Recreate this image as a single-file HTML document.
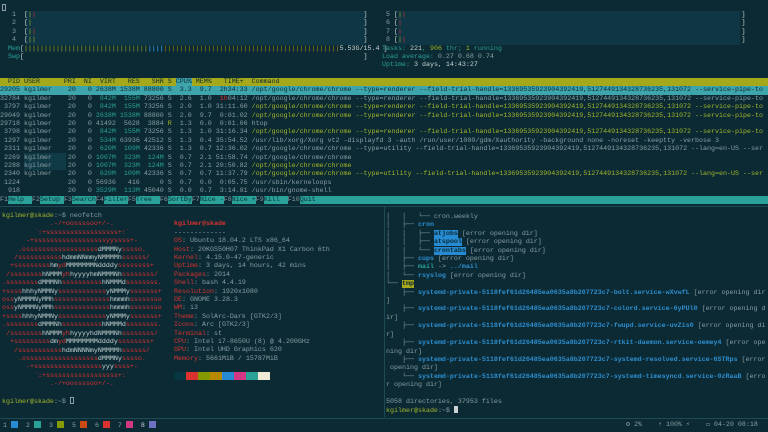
<!DOCTYPE html>
<html><head><meta charset="utf-8"><style>
*{margin:0;padding:0;box-sizing:border-box}
body{width:768px;height:432px;overflow:hidden;background:#0b2a34;font-family:"Liberation Mono",monospace;font-size:6.67px;color:#8a9ea3;position:relative}
pre{position:absolute;font-family:inherit;font-size:inherit;line-height:8.4px;white-space:pre;margin:0}
.r{color:#dc322f}.g{color:#a4b52a}.b{color:#2e8fd0;font-weight:bold}.c{color:#2aa198}.w{color:#c9d3d3}.y{color:#b58900}.m{color:#d33682}
.box{position:absolute}
.fk{background:#2aa198;color:#0b2a34}
.hb{background:#268bd2;color:#0b2a34;font-weight:bold}
.ht{background:#a4a81a;color:#0b2a34;font-weight:bold}
.sq{display:inline-block;width:7px;height:7px;vertical-align:-1px}
</style></head><body>
<div class="box" style="left:2px;top:4px;width:4px;height:7px;border:1px solid #8a9ea3"></div>
<div class="box" style="left:26px;top:11px;width:340px;height:34px;background:#0f3644"></div>
<div class="box" style="left:398px;top:11px;width:342px;height:34px;background:#0f3644"></div>
<pre style="left:0;top:11px">   1  <span class="w">[</span><span class="g">|</span><span class="r">|</span>                                                                                  <span class="w">]</span>
   2  <span class="w">[</span><span class="g">|</span>                                                                                   <span class="w">]</span>
   3  <span class="w">[</span><span class="g">|</span><span class="r">|</span>                                                                                  <span class="w">]</span>
   4  <span class="w">[</span><span class="g">||</span>                                                                                  <span class="w">]</span>
  <span class="c">Mem</span><span class="w">[</span><span class="g">|||||||||||||||||||||||||||||||</span><span class="b">||||</span><span class="y">||||||||||||||||||||||||||||||||||||||||||||</span><span class="w">5.53G/15.4</span> <span class="w">]</span>
  <span class="c">Swp</span><span class="w">[</span>                                                                                     <span class="w">]</span></pre>
<pre style="left:382px;top:11px"> 5 <span class="w">[</span><span class="g">|</span><span class="r">|</span>                                                                                    <span class="w">]</span>
 6 <span class="w">[</span><span class="r">|</span>                                                                                     <span class="w">]</span>
 7 <span class="w">[</span><span class="r">|</span>                                                                                     <span class="w">]</span>
 8 <span class="w">[</span><span class="g">|</span><span class="r">|</span>                                                                                    <span class="w">]</span>
<span class="c">Tasks: </span><span class="w">221</span><span class="c">, </span><span class="g">906</span><span class="c"> thr; </span><span class="g">1</span><span class="c"> running</span>
<span class="c">Load average: </span>0.27 0.68 0.74
<span class="c">Uptime: </span><span class="w">3 days, 14:43:27</span></pre>
<div class="box" style="left:0;top:78px;width:768px;height:8.4px;background:#a4a81a"></div>
<div class="box" style="left:0;top:86.4px;width:768px;height:8.4px;background:#3ea5ac"></div>
<div class="box" style="left:24px;top:153px;width:42px;height:17px;background:#113a47"></div>
<pre style="left:0;top:78px"><span style="color:#0b2a34">  PID USER      PRI  NI  VIRT   RES   SHR S </span><span style="background:#3ea5ac;color:#0b2a34">CPU%</span><span style="color:#0b2a34"> MEM%   TIME+  Command</span>
<span style="color:#0b2a34">29205 kgilmer    20   0 2638M 1538M 88800 S  3.3  9.7  2h34:33 /opt/google/chrome/chrome --type=renderer --field-trial-handle=13369535923904392419,5127449134328736235,131072 --service-pipe-to</span>
32784 kgilmer    20   0  <span class="c">842M  155M</span> 73256 S  2.6  1.0  <span class="r">1h</span>04:12 /opt/google/chrome/chrome --type=renderer --field-trial-handle=13369535923904392419,5127449134328736235,131072 --service-pipe-to
 3797 kgilmer    20   0  <span class="c">842M  155M</span> 73256 S  2.0  1.0 31:11.60 <span class="g">/opt/google/chrome/chrome --type=renderer --field-trial-handle=13369535923904392419,5127449134328736235,131072 --service-pipe-to</span>
29049 kgilmer    20   0 <span class="c">2638M 1538M</span> 88800 S  2.0  9.7  0:01.02 <span class="g">/opt/google/chrome/chrome --type=renderer --field-trial-handle=13369535923904392419,5127449134328736235,131072 --service-pipe-to</span>
29718 kgilmer    20   0 41492  5628  3884 <span class="g">R</span>  1.3  0.0  0:01.06 htop
 3798 kgilmer    20   0  <span class="c">842M  155M</span> 73256 S  1.3  1.0 31:16.34 <span class="g">/opt/google/chrome/chrome --type=renderer --field-trial-handle=13369535923904392419,5127449134328736235,131072 --service-pipe-to</span>
 1297 kgilmer    20   0  <span class="c">534M</span> 63936 42512 S  1.3  0.4 35:54.52 /usr/lib/xorg/Xorg vt2 -displayfd 3 -auth /run/user/1000/gdm/Xauthority -background none -noreset -keeptty -verbose 3
 2311 kgilmer    20   0  <span class="c">620M  109M</span> 42336 S  1.3  0.7 12:36.02 /opt/google/chrome/chrome --type=utility --field-trial-handle=13369535923904392419,5127449134328736235,131072 --lang=en-US --ser
 2269 kgilmer    20   0 <span class="c">1007M  323M  124M</span> S  0.7  2.1 51:58.74 /opt/google/chrome/chrome
 2288 kgilmer    20   0 <span class="c">1007M  323M  124M</span> S  0.7  2.1 20:50.82 <span class="g">/opt/google/chrome/chrome</span>
 2340 kgilmer    20   0  <span class="c">620M  109M</span> 42336 S  0.7  0.7 11:37.79 <span class="g">/opt/google/chrome/chrome --type=utility --field-trial-handle=13369535923904392419,5127449134328736235,131072 --lang=en-US --ser</span>
 1224            20   0 56936   416     0 S  0.7  0.0  0:05.75 /usr/sbin/kerneloops
  918            20   0 <span class="c">3529M  113M</span> 45040 S  0.0  0.7  3:14.81 /usr/bin/gnome-shell</pre>
<div class="box" style="left:304px;top:195.6px;width:464px;height:8.4px;background:#2aa198"></div>
<pre style="left:0;top:195.6px">F1<span class="fk">Help  </span>F2<span class="fk">Setup </span>F3<span class="fk">Search</span>F4<span class="fk">Filter</span>F5<span class="fk">Tree  </span>F6<span class="fk">SortBy</span>F7<span class="fk">Nice -</span>F8<span class="fk">Nice +</span>F9<span class="fk">Kill  </span>F10<span class="fk">Quit</span></pre>
<div class="box" style="left:0;top:206px;width:768px;height:1px;background:#1e4a56"></div>
<div class="box" style="left:384px;top:207px;width:1px;height:210px;background:#1e4a56"></div>
<pre style="left:2px;top:212px"><span class="g">kgilmer@skade</span>:~$ neofetch
<span class="r">            .-/+oossssoo+/-.</span>
<span class="r">        `:+ssssssssssssssssss+:`</span>
<span class="r">      -+ssssssssssssssssssyyssss+-</span>
<span class="r">    .ossssssssssssssssss</span><span class="w">dMMMNy</span><span class="r">sssso.</span>
<span class="r">   /sssssssssss</span><span class="w">hdmmNNmmyNMMMMh</span><span class="r">ssssss/</span>
<span class="r">  +sssssssss</span><span class="w">hm</span><span class="r">yd</span><span class="w">MMMMMMMNddddy</span><span class="r">ssssssss+</span>
<span class="r"> /ssssssss</span><span class="w">hNMMM</span><span class="r">yh</span><span class="w">hyyyyhmNMMMNh</span><span class="r">ssssssss/</span>
<span class="r">.ssssssss</span><span class="w">dMMMNh</span><span class="r">ssssssssss</span><span class="w">hNMMMd</span><span class="r">ssssssss.</span>
<span class="r">+ssss</span><span class="w">hhhyNMMNy</span><span class="r">ssssssssssss</span><span class="w">yNMMMy</span><span class="r">sssssss+</span>
<span class="r">oss</span><span class="w">yNMMMNyMMh</span><span class="r">ssssssssssssss</span><span class="w">hmmmh</span><span class="r">ssssssso</span>
<span class="r">oss</span><span class="w">yNMMMNyMMh</span><span class="r">ssssssssssssss</span><span class="w">hmmmh</span><span class="r">ssssssso</span>
<span class="r">+ssss</span><span class="w">hhhyNMMNy</span><span class="r">ssssssssssss</span><span class="w">yNMMMy</span><span class="r">sssssss+</span>
<span class="r">.ssssssss</span><span class="w">dMMMNh</span><span class="r">ssssssssss</span><span class="w">hNMMMd</span><span class="r">ssssssss.</span>
<span class="r"> /ssssssss</span><span class="w">hNMMM</span><span class="r">yh</span><span class="w">hyyyyhdNMMMNh</span><span class="r">ssssssss/</span>
<span class="r">  +sssssssss</span><span class="w">dm</span><span class="r">yd</span><span class="w">MMMMMMMMddddy</span><span class="r">ssssssss+</span>
<span class="r">   /sssssssssss</span><span class="w">hdmNNNNmyNMMMMh</span><span class="r">ssssss/</span>
<span class="r">    .ossssssssssssssssss</span><span class="w">dMMMNy</span><span class="r">sssso.</span>
<span class="r">      -+sssssssssssssssss</span><span class="w">yyy</span><span class="r">ssss+-</span>
<span class="r">        `:+ssssssssssssssssss+:`</span>
<span class="r">            .-/+oossssoo+/-.</span>

<span class="g">kgilmer@skade</span>:~$ <span style="display:inline-block;width:4px;height:7px;border:1px solid #8a9ea3;vertical-align:-1px"></span></pre>
<pre style="left:174px;top:220.4px"><span class="r" style="font-weight:bold">kgilmer@skade</span>
-------------
<span class="r">OS</span>: Ubuntu 18.04.2 LTS x86_64
<span class="r">Host</span>: 20KGS50H07 ThinkPad X1 Carbon 6th
<span class="r">Kernel</span>: 4.15.0-47-generic
<span class="r">Uptime</span>: 3 days, 14 hours, 42 mins
<span class="r">Packages</span>: 2014
<span class="r">Shell</span>: bash 4.4.19
<span class="r">Resolution</span>: 1920x1080
<span class="r">DE</span>: GNOME 3.28.3
<span class="r">WM</span>: i3
<span class="r">Theme</span>: SolArc-Dark [GTK2/3]
<span class="r">Icons</span>: Arc [GTK2/3]
<span class="r">Terminal</span>: st
<span class="r">CPU</span>: Intel i7-8650U (8) @ 4.200GHz
<span class="r">GPU</span>: Intel UHD Graphics 620
<span class="r">Memory</span>: 5661MiB / 15787MiB</pre>
<div class="box" style="left:174px;top:372px;height:8px;width:96px;display:flex">
<div style="flex:1;background:#073642"></div><div style="flex:1;background:#dc322f"></div><div style="flex:1;background:#859900"></div><div style="flex:1;background:#b58900"></div><div style="flex:1;background:#268bd2"></div><div style="flex:1;background:#d33682"></div><div style="flex:1;background:#2aa198"></div><div style="flex:1;background:#eee8d5"></div></div>
<pre style="left:386px;top:213px">│   │   └── cron.weekly
│   ├── <span class="b">cron</span>
│   │   ├── <span class="hb">atjobs</span> [error opening dir]
│   │   ├── <span class="hb">atspool</span> [error opening dir]
│   │   └── <span class="hb">crontabs</span> [error opening dir]
│   ├── <span class="b">cups</span> [error opening dir]
│   ├── <span class="c" style="font-weight:bold">mail</span> -&gt; <span class="b">../mail</span>
│   └── <span class="b">rsyslog</span> [error opening dir]
└── <span class="ht">tmp</span>
    ├── <span class="b">systemd-private-5118fef61d26485ea0635a8b207723c7-bolt.service-wXvwfL</span> [error opening dir
]
    ├── <span class="b">systemd-private-5118fef61d26485ea0635a8b207723c7-colord.service-6yPUl0</span> [error opening d
ir]
    ├── <span class="b">systemd-private-5118fef61d26485ea0635a8b207723c7-fwupd.service-uvZis0</span> [error opening di
r]
    ├── <span class="b">systemd-private-5118fef61d26485ea0635a8b207723c7-rtkit-daemon.service-oemey4</span> [error ope
ning dir]
    ├── <span class="b">systemd-private-5118fef61d26485ea0635a8b207723c7-systemd-resolved.service-6STRps</span> [error
 opening dir]
    └── <span class="b">systemd-private-5118fef61d26485ea0635a8b207723c7-systemd-timesyncd.service-0zRaaB</span> [erro
r opening dir]

5058 directories, 37953 files
<span class="g">kgilmer@skade</span>:~$ <span style="display:inline-block;width:4px;height:7px;background:#c9d3d3;vertical-align:-1px"></span></pre>
<div class="box" style="left:0;top:418px;width:768px;height:1px;background:#1e4a56"></div>
<pre style="left:3px;top:421px">1 <span class="sq" style="background:#268bd2"></span>  2 <span class="sq" style="background:#2aa198"></span>  3 <span class="sq" style="background:#859900"></span>  5 <span class="sq" style="background:#cb4b16"></span>  6 <span class="sq" style="background:#dc322f"></span>  7 <span class="sq" style="background:#d33682"></span>  <span class="w">8</span> <span class="sq" style="background:#6c71c4"></span></pre>
<pre style="left:626px;top:421px">⚙ 2%    ⇡ 100% ⚡    ▭ 04-20 08:18</pre>
</body></html>
